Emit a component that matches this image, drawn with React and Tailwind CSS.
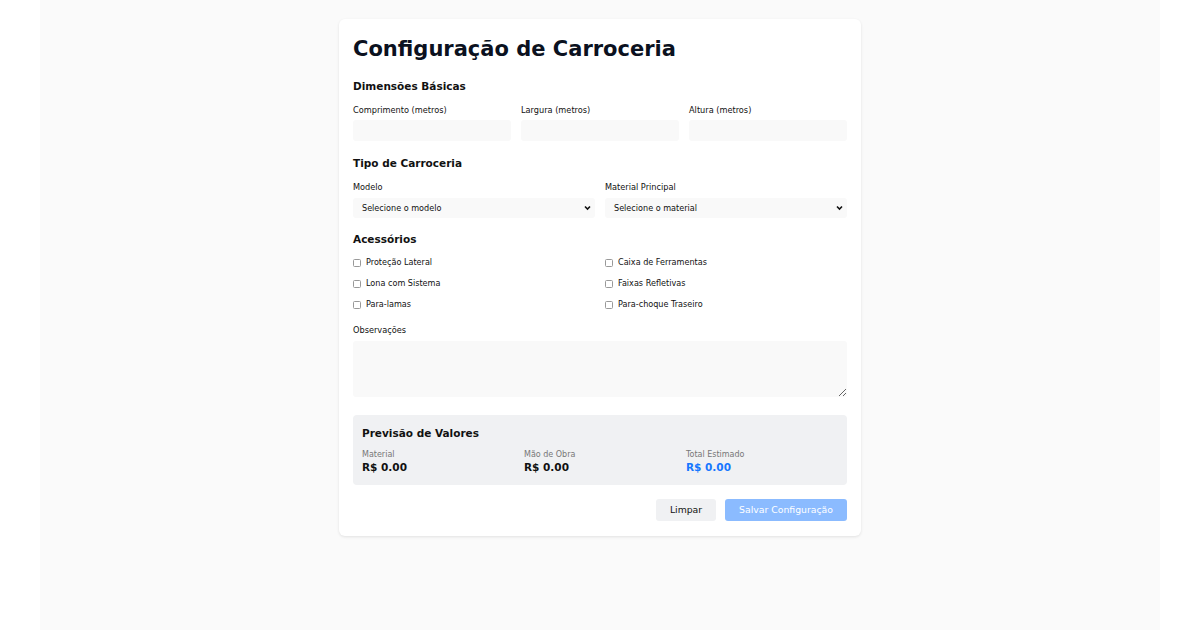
import React, { useState } from 'react'

const accessorios = [
  ['Proteção Lateral', 'Caixa de Ferramentas'],
  ['Lona com Sistema', 'Faixas Refletivas'],
  ['Para-lamas', 'Para-choque Traseiro'],
]

const Field = ({ label }) => (
  <div className="flex flex-col">
    <label className="text-[8.2px] text-[#111] mb-[4px] leading-[11px]">{label}</label>
    <input className="h-[21px] bg-[#f9f9f9] rounded-[3px] outline-none px-2 text-[9px]" />
  </div>
)

const SelectBox = ({ label, placeholder }) => (
  <div className="flex flex-col">
    <label className="text-[8.2px] text-[#111] mb-[5px] leading-[11px]">{label}</label>
    <div className="relative h-[20px] bg-[#f9f9f9] rounded-[3px] flex items-center pl-[9px]">
      <span className="text-[8.1px] text-[#111]">{placeholder}</span>
      <svg className="absolute right-[4px] top-[7px]" width="7" height="6" viewBox="0 0 7 6">
        <path d="M1 1.5 L3.5 4 L6 1.5" stroke="#111" strokeWidth="1.6" fill="none" />
      </svg>
    </div>
  </div>
)

export default function App() {
  const [checked, setChecked] = useState({})

  const toggle = (k) => setChecked({ ...checked, [k]: !checked[k] })

  return (
    <div className="w-full h-[630px] bg-white" style={{ fontFamily: '"DejaVu Sans", sans-serif' }}>
      <div className="max-w-[1120px] mx-auto h-full bg-[#fafafa] pt-[19px]">
        <div className="w-[522px] mx-auto bg-white rounded-[6px] shadow-[0_1px_3px_rgba(0,0,0,0.1)] px-[14px] pt-[15px] pb-[15px]">
          <h1 className="text-[21px] font-bold text-[#0b1120] leading-[30px] mb-[15px]">Configuração de Carroceria</h1>

          {/* Dimensões */}
          <h2 className="text-[10.5px] font-bold text-[#111] leading-[14px] mb-[12px]">Dimensões Básicas</h2>
          <div className="grid grid-cols-3 gap-[10px] mb-[15px]">
            <Field label="Comprimento (metros)" />
            <Field label="Largura (metros)" />
            <Field label="Altura (metros)" />
          </div>

          {/* Tipo */}
          <h2 className="text-[10.5px] font-bold text-[#111] leading-[14px] mb-[12px]">Tipo de Carroceria</h2>
          <div className="grid grid-cols-2 gap-[10px] mb-[14px]">
            <SelectBox label="Modelo" placeholder="Selecione o modelo" />
            <SelectBox label="Material Principal" placeholder="Selecione o material" />
          </div>

          {/* Acessórios */}
          <h2 className="text-[10.5px] font-bold text-[#111] leading-[14px] mb-[11px]">Acessórios</h2>
          <div className="grid grid-cols-2 gap-x-[10px] gap-y-[10px] mb-[15px]">
            {accessorios.flat().map((a) => (
              <label key={a} className="flex items-center gap-[5px] h-[11px] cursor-pointer" onClick={() => toggle(a)}>
                <span className={`w-[8px] h-[8px] border border-[#999] rounded-[1.5px] ${checked[a] ? 'bg-[#1677ff]' : 'bg-white'}`}></span>
                <span className="text-[8.1px] text-[#111]">{a}</span>
              </label>
            ))}
          </div>

          {/* Observações */}
          <label className="block text-[8.2px] text-[#111] mb-[5px] leading-[11px]">Observações</label>
          <textarea className="block w-full h-[56px] bg-[#f9f9f9] rounded-[3px] outline-none p-2 text-[9px] mb-[18px]" />

          {/* Previsão */}
          <div className="bg-[#f0f1f3] rounded-[4px] px-[9px] pt-[11px] pb-[11px] mb-[14px]">
            <h3 className="text-[10.5px] font-bold text-[#111] leading-[14px] mb-[9px]">Previsão de Valores</h3>
            <div className="grid grid-cols-3 gap-[10px]">
              <div>
                <div className="text-[8px] text-[#777] leading-[11px]">Material</div>
                <div className="text-[10.5px] font-bold text-[#111] leading-[14px]">R$ 0.00</div>
              </div>
              <div>
                <div className="text-[8px] text-[#777] leading-[11px]">Mão de Obra</div>
                <div className="text-[10.5px] font-bold text-[#111] leading-[14px]">R$ 0.00</div>
              </div>
              <div>
                <div className="text-[8px] text-[#777] leading-[11px]">Total Estimado</div>
                <div className="text-[10.5px] font-bold text-[#1677ff] leading-[14px]">R$ 0.00</div>
              </div>
            </div>
          </div>

          <div className="flex justify-end gap-[9px]">
            <button className="h-[22px] w-[60px] bg-[#f0f1f3] rounded-[3px] text-[9.3px] text-[#111]">Limpar</button>
            <button className="h-[22px] w-[122px] bg-[#8bbbff] rounded-[3px] text-[9.3px] text-white">Salvar Configuração</button>
          </div>
        </div>
      </div>
    </div>
  )
}
